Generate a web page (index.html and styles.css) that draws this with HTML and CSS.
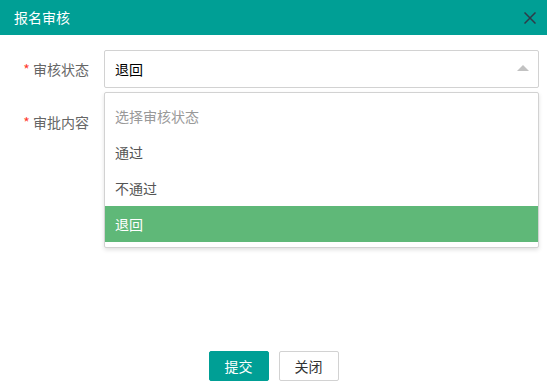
FILE: index.html
```html
<!DOCTYPE html>
<html lang="zh">
<head>
<meta charset="utf-8">
<link rel="stylesheet" href="styles.css">
</head>
<body>
<div class="dialog">
  <div class="header">
    <span class="title">报名审核</span>
    <svg class="close" width="12" height="12" viewBox="0 0 12 12"><path d="M0.5 0.5 L11.5 11.5 M11.5 0.5 L0.5 11.5" stroke="#2f3a48" stroke-width="1.5" fill="none"/></svg>
  </div>
  <div class="form">
    <div class="row">
      <label class="label"><span class="req">*</span> 审核状态</label>
      <div class="field">
        <div class="select">
          <span class="value">退回</span>
          <span class="arrow"></span>
        </div>
        <div class="dropdown">
          <div class="opt placeholder">选择审核状态</div>
          <div class="opt">通过</div>
          <div class="opt">不通过</div>
          <div class="opt selected">退回</div>
        </div>
      </div>
    </div>
    <div class="row">
      <label class="label"><span class="req">*</span> 审批内容</label>
      <div class="field"></div>
    </div>
  </div>
  <div class="footer">
    <button class="btn primary">提交</button>
    <button class="btn">关闭</button>
  </div>
</div>
</body>
</html>
```

FILE: styles.css
```css
* { box-sizing: border-box; }
html, body { margin: 0; padding: 0; }
body {
  font-family: "Noto Sans CJK SC", "Noto Sans", sans-serif;
  font-size: 14px;
  color: #333;
  background: #fff;
}
.dialog {
  height: 389px;
  display: flex;
  flex-direction: column;
}
.header {
  height: 35px;
  background: #009f95;
  display: flex;
  align-items: center;
  justify-content: space-between;
  padding: 0 11px 0 14px;
  flex-shrink: 0;
}
.title {
  color: #fff;
  font-size: 14px;
  line-height: 35px;
}
.close { display: block; margin-top: 1px; }
.form { padding: 15px 8px 0 0; }
.row {
  display: flex;
  margin-bottom: 15px;
  min-height: 38px;
}
.label {
  width: 104px;
  flex-shrink: 0;
  text-align: right;
  padding-right: 15px;
  line-height: 38px;
  color: #666;
}
.req { color: #ff3b30; }
.field {
  flex: 1;
  position: relative;
}
.select {
  height: 38px;
  border: 1px solid #d2d2d2;
  border-radius: 2px;
  display: flex;
  align-items: center;
  justify-content: space-between;
  padding: 0 9px 0 10px;
  color: #000;
}
.arrow {
  width: 0; height: 0;
  border-left: 6px solid transparent;
  border-right: 6px solid transparent;
  border-bottom: 6px solid #c2c2c2;
  margin-top: -2px;
}
.dropdown {
  position: absolute;
  top: 42px;
  left: 0;
  right: 0;
  border: 1px solid #d2d2d2;
  background: #fff;
  padding: 5px 0;
  box-shadow: 0 2px 4px rgba(0,0,0,.12);
  border-radius: 2px;
  z-index: 10;
}
.opt {
  line-height: 36px;
  height: 36px;
  padding: 0 10px;
  color: #555;
}
.opt.placeholder { color: #999; }
.opt.selected { background: #5fb878; color: #fff; }
.footer {
  margin-top: auto;
  display: flex;
  justify-content: center;
  gap: 10px;
  padding-bottom: 8px;
}
.btn {
  width: 60px;
  height: 30px;
  font-family: inherit;
  font-size: 14px;
  border: 1px solid #d2d2d2;
  border-radius: 2px;
  background: #fff;
  color: #333;
  padding: 0;
  line-height: 28px;
}
.btn.primary {
  background: #009f95;
  border-color: #009f95;
  color: #fff;
}
```
